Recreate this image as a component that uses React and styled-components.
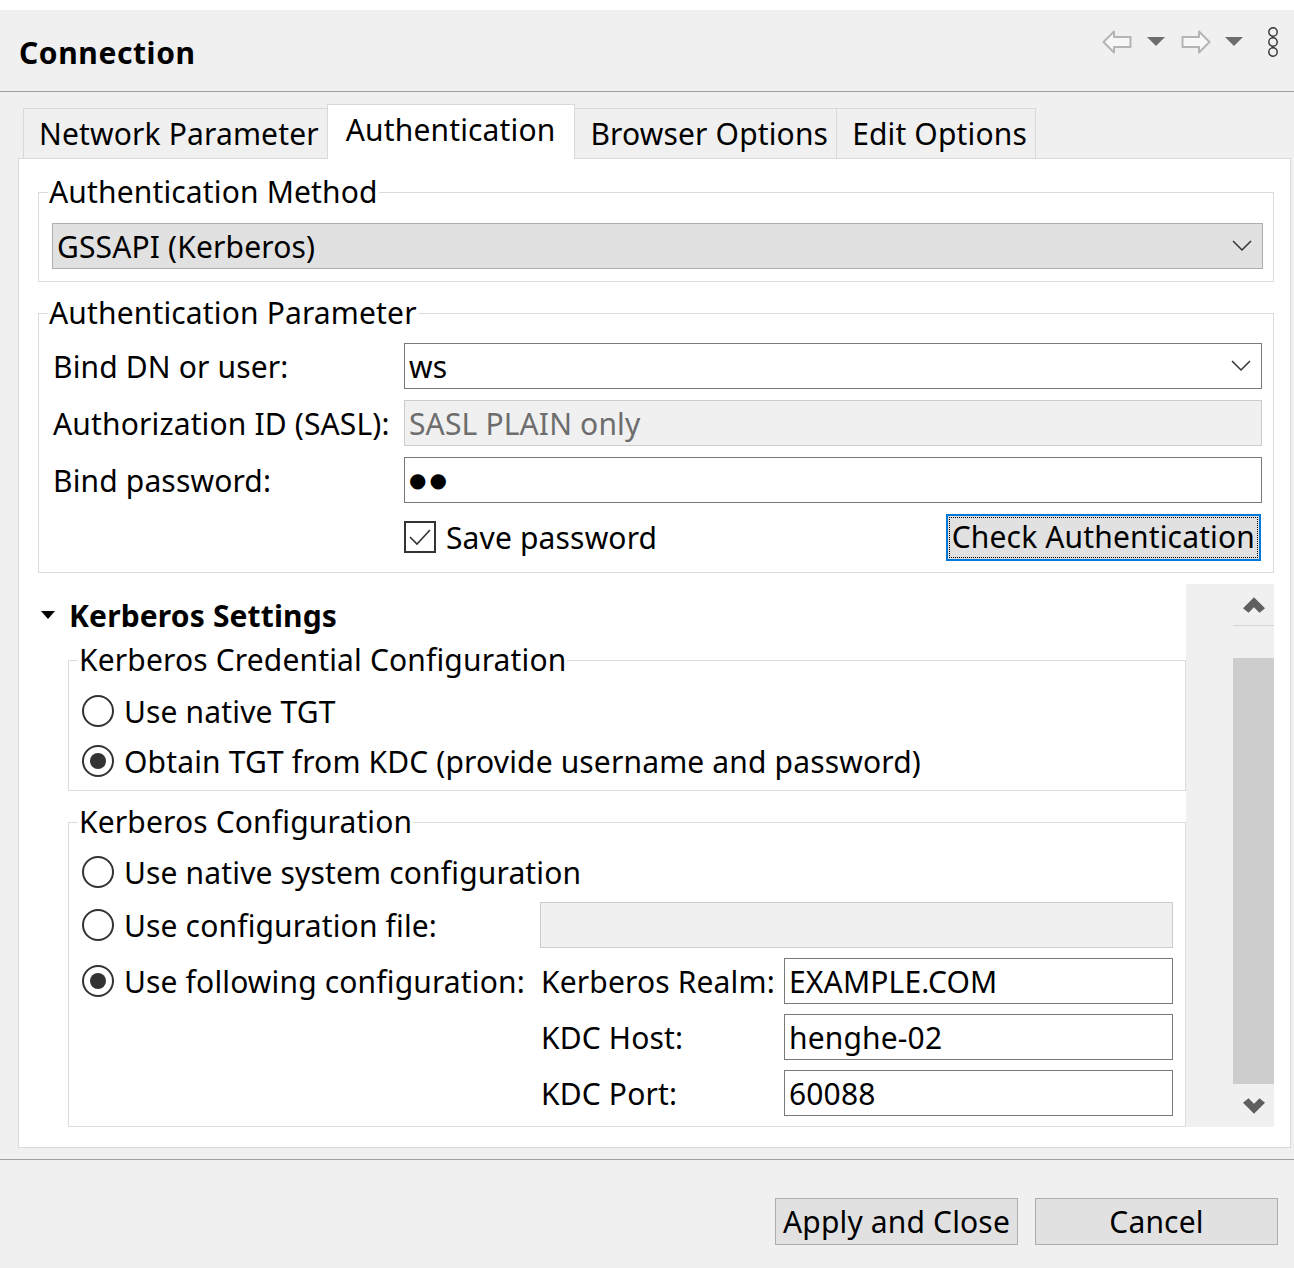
import React from "react";
import styled, { createGlobalStyle } from "styled-components";

const GlobalStyle = createGlobalStyle`
  html, body {
    margin: 0;
    padding: 0;
    background: #ffffff;
  }
  body {
    font-family: "Noto Sans", "DejaVu Sans", sans-serif;
    font-size: 30px;
    letter-spacing: 0.15px;
    color: #000;
  }
  * {
    box-sizing: border-box;
  }
`;

const Dialog = styled.div`
  margin-top: 10px;
  height: 1258px;
  background: #f0f0f0;
  display: flex;
  flex-direction: column;
`;

const Header = styled.header`
  height: 82px;
  flex: none;
  display: flex;
  align-items: center;
  justify-content: space-between;
  padding: 4px 14px 0 19px;
  border-bottom: 1px solid #a0a0a0;
`;

const Title = styled.h1`
  margin: 0;
  font-size: 30px;
  font-weight: 700;
  letter-spacing: 0.6px;
`;

const Toolbar = styled.div`
  display: flex;
  align-items: center;
  margin-top: -22px;
`;

const ToolItem = styled.span`
  display: flex;
  margin-left: ${(p) => p.$gap || "0"};
`;

const Body = styled.div`
  padding: 12px 3px 11px 18px;
  display: flex;
  flex-direction: column;
`;

const TabBar = styled.div`
  display: flex;
  align-items: flex-end;
  height: 55px;
  margin: 0 0 -1px 6px;
  position: relative;
  z-index: 1;
`;

const Tab = styled.div`
  height: ${(p) => (p.$active ? "55px" : "51px")};
  padding: ${(p) => (p.$active ? "0 19px 6px 18px" : "0 8px 0 15px")};
  display: flex;
  align-items: center;
  background: ${(p) => (p.$active ? "#ffffff" : "#f0f0f0")};
  border: 1px solid #d9d9d9;
  border-bottom: ${(p) => (p.$active ? "none" : "1px solid #d9d9d9")};
  margin-left: -1px;
  white-space: nowrap;
`;

const Panel = styled.div`
  height: 990px;
  background: #ffffff;
  border: 1px solid #d9d9d9;
  padding: 13px 16px 0 19px;
`;

const Group = styled.fieldset`
  margin: ${(p) => p.$margin || "0"};
  padding: ${(p) => p.$padding || "11px 10px 12px 13px"};
  border: 1px solid #dcdcdc;
  min-width: 0;
`;

const Legend = styled.legend`
  margin-left: -4px;
  padding: 0 1px;
  line-height: 40px;
  height: 40px;
  white-space: nowrap;
`;

const Combo = styled.div`
  height: 46px;
  display: flex;
  align-items: center;
  justify-content: space-between;
  padding: 0 10px 0 4px;
  background: ${(p) => (p.$readonly ? "#e1e1e1" : "#ffffff")};
  border: 1px solid ${(p) => (p.$readonly ? "#adadad" : "#7a7a7a")};
`;

const ParamGrid = styled.div`
  display: grid;
  grid-template-columns: 351px 1fr;
  grid-auto-rows: 46px;
  row-gap: 11px;
  padding-left: 1px;
  align-items: center;
  & > :last-child {
    height: 47px;
  }
`;

const Label = styled.span`
  white-space: nowrap;
  padding-left: ${(p) => p.$indent || "0"};
`;

const TextInput = styled.input`
  height: 46px;
  width: 100%;
  margin: 0;
  padding: 0 4px;
  font: inherit;
  letter-spacing: 0.15px;
  color: ${(p) => (p.disabled ? "#6d6d6d" : "#000")};
  background: ${(p) => (p.disabled ? "#f0f0f0" : "#ffffff")};
  border: 1px solid ${(p) => (p.disabled ? "#cccccc" : "#7a7a7a")};
  border-radius: 0;
  outline: none;
  grid-column: ${(p) => p.$span || "auto"};
`;

const PasswordDots = styled(TextInput)`
  font-family: "DejaVu Sans", sans-serif;
  font-size: 20px;
  letter-spacing: 3px;
`;

const SaveRow = styled.div`
  grid-column: 2;
  display: flex;
  align-items: center;
  justify-content: space-between;
  padding-right: 1px;
`;

const CheckLabel = styled.label`
  display: flex;
  align-items: center;
  gap: 10px;
`;

const CheckBox = styled.span`
  width: 32px;
  height: 32px;
  border: 2px solid #333;
  display: flex;
  align-items: center;
  justify-content: center;
  background: #fff;
`;

const Button = styled.button`
  font: inherit;
  letter-spacing: 0.15px;
  color: #000;
  height: 47px;
  margin: 0;
  width: ${(p) => p.$width || "auto"};
  padding: 0 4px;
  background: #e1e1e1;
  border: ${(p) => (p.$focused ? "2px solid #0078d7" : "1px solid #adadad")};
  outline: ${(p) => (p.$focused ? "1px dotted #000" : "none")};
  outline-offset: -4px;
  white-space: nowrap;
  line-height: 1;
`;

const ScrollArea = styled.div`
  margin-top: 11px;
  height: 543px;
  display: flex;
  background: #f0f0f0;
`;

const ScrollContent = styled.div`
  width: 1148px;
  background: #ffffff;
  padding-top: 11px;
`;

const SectionHeader = styled.div`
  height: 40px;
  display: flex;
  align-items: center;
  gap: 14px;
  padding-left: 3px;
  font-weight: 700;
`;

const RadioRow = styled.label`
  display: flex;
  align-items: center;
  gap: 10px;
  height: 40px;
  white-space: nowrap;
  grid-column: ${(p) => p.$span || "auto"};
`;

const RadioStack = styled.div`
  display: flex;
  flex-direction: column;
  gap: 10px;
`;

const Radio = styled.span`
  width: 32px;
  height: 32px;
  flex: none;
  border-radius: 50%;
  border: 2px solid #333;
  display: flex;
  align-items: center;
  justify-content: center;
  &::after {
    content: "";
    width: 16px;
    height: 16px;
    border-radius: 50%;
    background: ${(p) => (p.$checked ? "#333" : "transparent")};
  }
`;

const ConfigGrid = styled.div`
  display: grid;
  grid-template-columns: 458px 244px 1fr;
  grid-template-rows: 40px repeat(4, 46px);
  row-gap: 10px;
  align-items: center;
`;

const ScrollBar = styled.div`
  width: 41px;
  margin-left: auto;
  display: flex;
  flex-direction: column;
`;

const ScrollButton = styled.div`
  height: ${(p) => p.$height};
  flex: none;
  display: flex;
  align-items: center;
  justify-content: center;
  border-bottom: ${(p) => (p.$line ? "1px solid #d4d4d4" : "none")};
  margin-top: ${(p) => (p.$bottom ? "auto" : "0")};
`;

const ScrollTrack = styled.div`
  flex: 1;
  display: flex;
  flex-direction: column;
  padding-top: 32px;
`;

const Thumb = styled.div`
  height: 426px;
  background: #cdcdcd;
`;

const Footer = styled.footer`
  flex: 1;
  border-top: 1px solid #a0a0a0;
  display: flex;
  justify-content: flex-end;
  align-items: flex-start;
  gap: 17px;
  padding: 38px 16px 0 0;
`;

const Chevron = () => (
  <svg width="20" height="12" viewBox="0 0 20 12">
    <path d="M1 1 L10 10 L19 1" fill="none" stroke="#333" strokeWidth="1.5" />
  </svg>
);

const ArrowIcon = ({ flip }) => (
  <svg
    width="30"
    height="26"
    viewBox="0 0 30 26"
    style={flip ? { transform: "scaleX(-1)" } : undefined}
  >
    <polygon
      points="1.5,13 12,2.5 12,8 28.5,8 28.5,18 12,18 12,23.5"
      fill="#f7f7f7"
      stroke="#b4b4b4"
      strokeWidth="2"
      strokeLinejoin="round"
    />
  </svg>
);

const DropTriangle = () => (
  <svg width="18" height="10" viewBox="0 0 18 10">
    <polygon points="0,0 18,0 9,9" fill="#6d6d6d" />
  </svg>
);

const MoreIcon = () => (
  <svg width="14" height="30" viewBox="0 0 14 30">
    <circle cx="7" cy="5" r="4.2" fill="none" stroke="#333" strokeWidth="1.4" />
    <circle cx="7" cy="15" r="4.2" fill="none" stroke="#333" strokeWidth="1.4" />
    <circle cx="7" cy="25" r="4.2" fill="none" stroke="#333" strokeWidth="1.4" />
  </svg>
);

const CheckMark = () => (
  <svg width="24" height="20" viewBox="0 0 24 20">
    <path d="M2 10 L9 17 L22 3" fill="none" stroke="#333" strokeWidth="1.6" />
  </svg>
);

const ScrollArrow = ({ down }) => (
  <svg width="22" height="18" viewBox="0 0 20 16">
    <polygon
      points={
        down
          ? "0,5 5,1 10,6 15,1 20,5 10,15"
          : "0,11 10,1 20,11 15,15 10,10 5,15"
      }
      fill="#5f5f5f"
    />
  </svg>
);

const Expander = () => (
  <svg width="14" height="9" viewBox="0 0 14 9">
    <polygon points="0,0 14,0 7,8" fill="#000" />
  </svg>
);

const App = () => {
  return (
    <>
      <GlobalStyle />
      <Dialog>
        <Header>
          <Title>Connection</Title>
          <Toolbar>
            <ToolItem>
              <ArrowIcon />
            </ToolItem>
            <ToolItem $gap="15px">
              <DropTriangle />
            </ToolItem>
            <ToolItem $gap="16px">
              <ArrowIcon flip />
            </ToolItem>
            <ToolItem $gap="14px">
              <DropTriangle />
            </ToolItem>
            <ToolItem $gap="23px">
              <MoreIcon />
            </ToolItem>
          </Toolbar>
        </Header>

        <Body>
          <TabBar>
            <Tab>Network Parameter</Tab>
            <Tab $active>Authentication</Tab>
            <Tab>Browser Options</Tab>
            <Tab>Edit Options</Tab>
          </TabBar>

          <Panel>
            <Group>
              <Legend>Authentication Method</Legend>
              <Combo $readonly>
                <span>GSSAPI (Kerberos)</span>
                <Chevron />
              </Combo>
            </Group>

            <Group $margin="11px 0 0 0" $padding="10px 11px 12px 13px">
              <Legend>Authentication Parameter</Legend>
              <ParamGrid>
                <Label>Bind DN or user:</Label>
                <Combo>
                  <span>ws</span>
                  <Chevron />
                </Combo>
                <Label>Authorization ID (SASL):</Label>
                <TextInput disabled defaultValue="SASL PLAIN only" />
                <Label>Bind password:</Label>
                <PasswordDots readOnly defaultValue={"\u25CF\u25CF"} />
                <SaveRow>
                  <CheckLabel>
                    <CheckBox>
                      <CheckMark />
                    </CheckBox>
                    Save password
                  </CheckLabel>
                  <Button $focused>Check Authentication</Button>
                </SaveRow>
              </ParamGrid>
            </Group>

            <ScrollArea>
              <ScrollContent>
                <SectionHeader>
                  <Expander />
                  Kerberos Settings
                </SectionHeader>

                <Group $margin="5px 0 0 30px" $padding="11px 10px 9px 13px">
                  <Legend>Kerberos Credential Configuration</Legend>
                  <RadioStack>
                    <RadioRow>
                      <Radio />
                      Use native TGT
                    </RadioRow>
                    <RadioRow>
                      <Radio $checked />
                      Obtain TGT from KDC (provide username and password)
                    </RadioRow>
                  </RadioStack>
                </Group>

                <Group $margin="11px 0 0 30px" $padding="10px 12px 10px 13px">
                  <Legend>Kerberos Configuration</Legend>
                  <ConfigGrid>
                    <RadioRow $span="1 / 4">
                      <Radio />
                      Use native system configuration
                    </RadioRow>

                    <RadioRow>
                      <Radio />
                      Use configuration file:
                    </RadioRow>
                    <TextInput disabled defaultValue="" $span="2 / 4" />

                    <RadioRow>
                      <Radio $checked />
                      Use following configuration:
                    </RadioRow>
                    <Label $indent="1px">Kerberos Realm:</Label>
                    <TextInput readOnly defaultValue="EXAMPLE.COM" />

                    <span />
                    <Label $indent="1px">KDC Host:</Label>
                    <TextInput readOnly defaultValue="henghe-02" />

                    <span />
                    <Label $indent="1px">KDC Port:</Label>
                    <TextInput readOnly defaultValue="60088" />
                  </ConfigGrid>
                </Group>
              </ScrollContent>

              <ScrollBar>
                <ScrollButton $height="42px" $line>
                  <ScrollArrow />
                </ScrollButton>
                <ScrollTrack>
                  <Thumb />
                  <ScrollButton $height="43px" $bottom>
                    <ScrollArrow down />
                  </ScrollButton>
                </ScrollTrack>
              </ScrollBar>
            </ScrollArea>
          </Panel>
        </Body>

        <Footer>
          <Button $width="243px">Apply and Close</Button>
          <Button $width="243px">Cancel</Button>
        </Footer>
      </Dialog>
    </>
  );
};

export default App;
